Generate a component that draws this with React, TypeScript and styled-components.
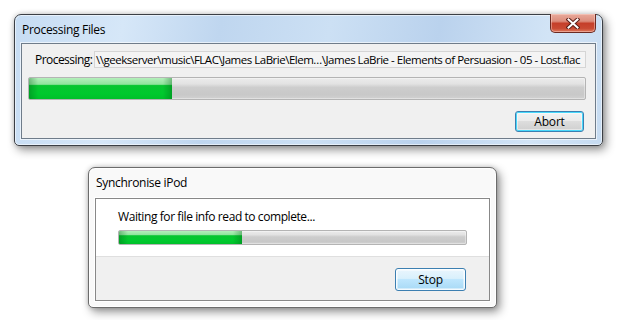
import React from "react";
import styled, { createGlobalStyle } from "styled-components";

const Global = createGlobalStyle`
  html, body { margin: 0; padding: 0; background: #ffffff; }
  body { font-family: "Open Sans", "Noto Sans", sans-serif; font-size: 12px; color: #000; }
`;

const Page = styled.div`
  display: flex;
  flex-direction: column;
  align-items: flex-start;
  padding: 14px 0 0 14px;
  width: 617px;
  height: 320px;
  box-sizing: border-box;
`;

const Window = styled.div<{ $variant: "aero" | "light"; $w: number; $h: number; $ml?: number; $mt?: number }>`
  box-sizing: border-box;
  width: ${(p) => p.$w}px;
  height: ${(p) => p.$h}px;
  margin-left: ${(p) => p.$ml ?? 0}px;
  margin-top: ${(p) => p.$mt ?? 0}px;
  display: flex;
  flex-direction: column;
  border: 1px solid ${(p) => (p.$variant === "aero" ? "#3b3f45" : "#6c6c6c")};
  border-radius: 7px 7px 5px 5px;
  padding: 0 6px 6px 6px;
  background: ${(p) =>
    p.$variant === "aero"
      ? "linear-gradient(100deg, #c6dcf3 0%, #d6e7f8 18%, #bfd6ef 34%, #cce0f4 52%, #bad2ed 70%, #d2e4f6 88%, #c6dbf1 100%)"
      : "#f9f9f9"};
  box-shadow: inset 0 0 0 1px ${(p) => (p.$variant === "aero" ? "rgba(255,255,255,0.55)" : "rgba(255,255,255,0.9)")},
    3px 4px 10px rgba(0, 0, 0, 0.42), 0 0 5px rgba(0, 0, 0, 0.18);
`;

const TitleBar = styled.div<{ $h: number }>`
  height: ${(p) => p.$h}px;
  display: flex;
  align-items: flex-start;
  justify-content: space-between;
  flex-shrink: 0;
`;

const Title = styled.div<{ $top: number }>`
  padding: ${(p) => p.$top}px 0 0 1px;
  font-size: 12px;
  letter-spacing: -0.3px;
  color: #000;
  line-height: 16px;
`;

const CloseButton = styled.div`
  width: 46px;
  height: 19px;
  margin-top: -1px;
  box-sizing: border-box;
  border: 1px solid #6b2a22;
  border-top: none;
  border-radius: 0 0 5px 5px;
  background: linear-gradient(to bottom, #e9aa9c 0%, #dc8d7c 40%, #c53f2a 52%, #c94a33 80%, #df7a5e 100%);
  box-shadow: inset 0 0 0 1px rgba(255, 220, 210, 0.45);
  display: flex;
  align-items: center;
  justify-content: center;
`;

const Client = styled.div<{ $variant: "aero" | "light" }>`
  flex: 1;
  display: flex;
  flex-direction: column;
  border: 1px solid ${(p) => (p.$variant === "aero" ? "#6f7c8a" : "#888888")};
  box-shadow: 0 0 0 1px ${(p) => (p.$variant === "aero" ? "rgba(255,255,255,0.6)" : "#ffffff")};
  background: #f0f0f0;
  min-height: 0;
`;

const FieldRow = styled.div`
  display: flex;
  align-items: center;
  padding: 7px 9px 0 13px;
  height: 17px;
`;

const Label = styled.span`
  letter-spacing: -0.55px;
  width: 59px;
  flex-shrink: 0;
  line-height: 17px;
`;

const ReadOnlyField = styled.div`
  flex: 1;
  height: 17px;
  box-sizing: border-box;
  border: 1px solid #d5d5d5;
  background: #f4f4f4;
  padding: 0 0 0 1px;
  font-size: 11.5px;
  line-height: 15px;
  white-space: nowrap;
  overflow: hidden;
  letter-spacing: -0.49px;
`;

const Track = styled.div<{ $h: number }>`
  position: relative;
  box-sizing: border-box;
  height: ${(p) => p.$h}px;
  border: 1px solid #b4b4b4;
  border-radius: 2px;
  background: linear-gradient(to bottom, #ececec 0%, #e2e2e2 28%, #cdcdcd 45%, #c8c8c8 80%, #d2d2d2 100%);
  box-shadow: inset 0 0 0 1px rgba(255, 255, 255, 0.35);
  overflow: hidden;
`;

const Fill = styled.div`
  height: 100%;
  background: linear-gradient(to right, rgba(0, 90, 20, 0.35), rgba(0, 90, 20, 0) 9px, rgba(0, 90, 20, 0) calc(100% - 9px), rgba(0, 90, 20, 0.35)),
    linear-gradient(to bottom, #b4efbb 0%, #8fe39c 30%, #06c52f 36%, #00c92e 75%, #00c02a 100%);
`;

const ProgressWrap = styled.div<{ $pad: string }>`
  padding: ${(p) => p.$pad};
`;

const ButtonRow = styled.div<{ $pad: string }>`
  display: flex;
  justify-content: flex-end;
  padding: ${(p) => p.$pad};
`;

const Button = styled.button<{ $hot?: boolean; $w: number; $h: number }>`
  width: ${(p) => p.$w}px;
  height: ${(p) => p.$h}px;
  box-sizing: border-box;
  font-family: "Open Sans", "Noto Sans", sans-serif;
  font-size: 12px;
  letter-spacing: -0.2px;
  color: #000;
  padding: 0;
  border: 1px solid #3c7fb1;
  border-radius: 3px;
  background: ${(p) =>
    p.$hot
      ? "linear-gradient(to bottom, #eaf6fd 0%, #d9f0fc 45%, #bee6fd 50%, #a7d9f5 100%)"
      : "linear-gradient(to bottom, #f2f2f2 0%, #ebebeb 45%, #dddddd 50%, #cfcfcf 100%)"};
  box-shadow: inset 0 0 0 1px ${(p) => (p.$hot ? "rgba(255,255,255,0.75)" : "#48d8fb")},
    inset 0 0 0 2px rgba(255, 255, 255, 0.45);
  display: flex;
  align-items: center;
  justify-content: center;
  line-height: 16px;
`;

const WhitePanel = styled.div`
  background: #ffffff;
  border-bottom: 1px solid #dfdfdf;
  padding: 10px 22px 11px 22px;
  display: flex;
  flex-direction: column;
`;

const Message = styled.div`
  letter-spacing: -0.42px;
  line-height: 16px;
  height: 16px;
  margin-bottom: 5px;
`;

const GrayPanel = styled.div`
  flex: 1;
  display: flex;
  align-items: flex-start;
  justify-content: flex-end;
  padding: 11px 23px 0 0;
`;

const CloseGlyph = () => (
  <svg width="14" height="11" viewBox="0 0 14 11">
    <path d="M2.5 1.5 L11.5 9.5 M11.5 1.5 L2.5 9.5" stroke="#5a1e18" strokeWidth="4" strokeLinecap="square" />
    <path d="M2.5 1.5 L11.5 9.5 M11.5 1.5 L2.5 9.5" stroke="#ffffff" strokeWidth="2" strokeLinecap="square" />
  </svg>
);

export default function App() {
  return (
    <>
      <Global />
      <Page>
        <Window $variant="aero" $w={589} $h={132}>
          <TitleBar $h={28}>
            <Title $top={7}>Processing Files</Title>
            <CloseButton>
              <CloseGlyph />
            </CloseButton>
          </TitleBar>
          <Client $variant="aero">
            <FieldRow>
              <Label>Processing:</Label>
              <ReadOnlyField>
                \\geekserver\music\FLAC\James LaBrie\Elem…\James LaBrie - Elements of Persuasion - 05 - Lost.flac
              </ReadOnlyField>
            </FieldRow>
            <ProgressWrap $pad="9px 9px 0 6px">
              <Track $h={23}>
                <Fill style={{ width: "25.8%" }} />
              </Track>
            </ProgressWrap>
            <ButtonRow $pad="11px 11px 0 0">
              <Button $w={69} $h={21}>Abort</Button>
            </ButtonRow>
          </Client>
        </Window>

        <Window $variant="light" $w={409} $h={141} $ml={74} $mt={21}>
          <TitleBar $h={30}>
            <Title $top={7}>Synchronise iPod</Title>
          </TitleBar>
          <Client $variant="light">
            <WhitePanel>
              <Message>Waiting for file info read to complete...</Message>
              <Track $h={15}>
                <Fill style={{ width: "35.5%" }} />
              </Track>
            </WhitePanel>
            <GrayPanel>
              <Button $hot $w={71} $h={23}>Stop</Button>
            </GrayPanel>
          </Client>
        </Window>
      </Page>
    </>
  );
}
